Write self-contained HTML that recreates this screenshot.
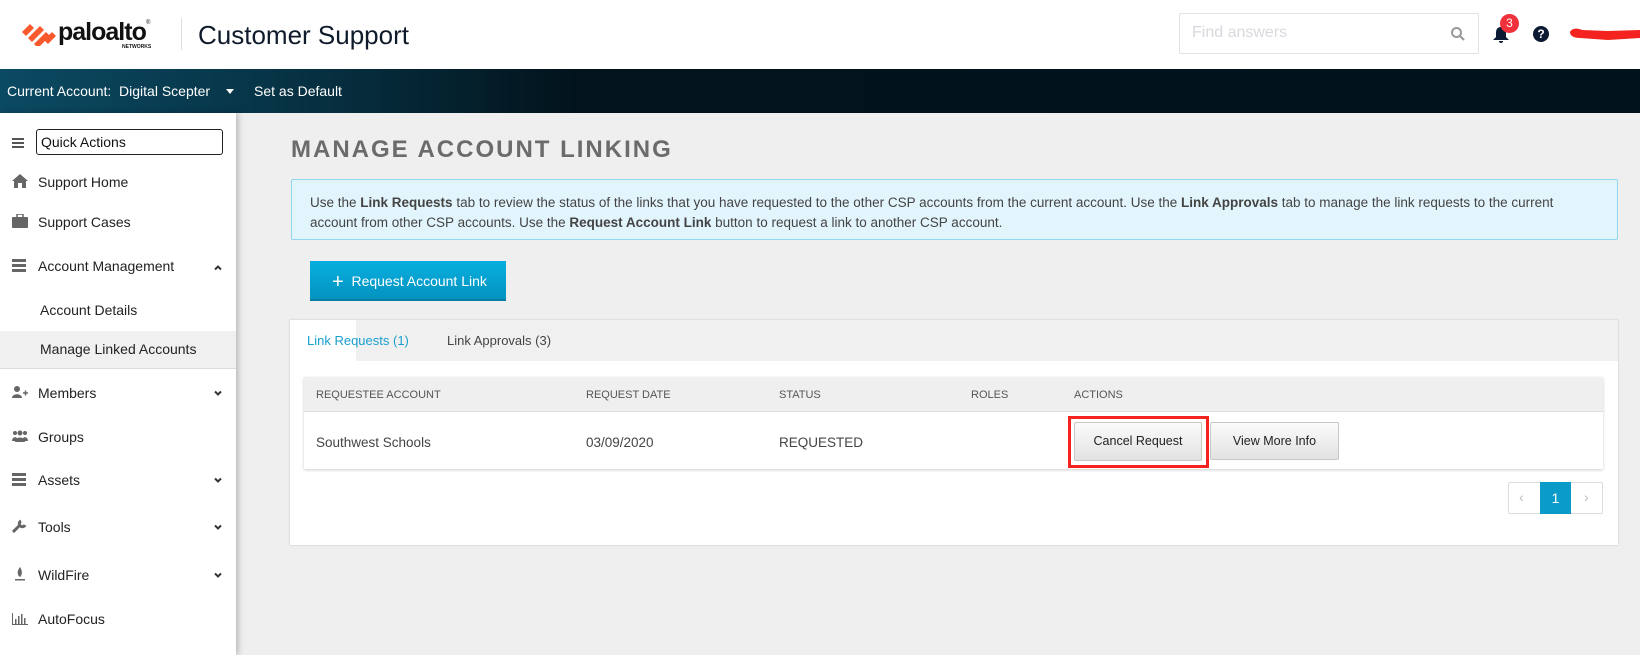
<!DOCTYPE html>
<html><head><meta charset="utf-8"><style>
*{margin:0;padding:0;box-sizing:border-box}
body{width:1640px;height:655px;overflow:hidden;background:#efefef;font-family:"Liberation Sans",sans-serif;position:relative;color:#333}
.a{position:absolute;white-space:nowrap}
#hdr{left:0;top:0;width:1640px;height:69px;background:#fff}
#nav{left:0;top:69px;width:1640px;height:44px;background:linear-gradient(90deg,#0b4a63 0%,#062f40 20%,#02131c 35%,#01121b 100%);color:#fff;font-size:14px}
#side{left:0;top:113px;width:236px;height:542px;background:#fff;box-shadow:2px 0 6px rgba(0,0,0,.25)}
.mi{position:absolute;left:38px;font-size:14px;color:#222}
.ic{position:absolute;left:12px;width:16px;height:14px}
.chev{position:absolute;left:213px;width:10px;height:7px}
.th{position:absolute;top:12px;font-size:11px;color:#555}
.btn{position:absolute;border:1px solid #c8c8c8;background:linear-gradient(#fbfbfb,#e2e2e2);font-size:12.5px;color:#222;text-align:center;line-height:37px;border-radius:2px}
</style></head><body>
<div class="a" id="hdr">
 <svg class="a" style="left:20px;top:22px" width="48" height="24" viewBox="0 0 48 24">
  <g fill="#fa582d"><path d="M2 10 L10 2 L14 6 L6 14Z"/><path d="M8 16 L20 4 L24 8 L12 20Z"/><path d="M14 22 L26 10 L30 14 L18 26Z"/><path d="M24 18 L32 10 L36 14 L28 22Z"/></g>
 </svg>
 <div class="a" style="left:58px;top:18px;font-size:25px;font-weight:bold;color:#111;letter-spacing:-1px">paloalto</div>
 <div class="a" style="left:146px;top:20px;font-size:6px;color:#111">®</div>
 <div class="a" style="left:122px;top:44px;font-size:5px;font-weight:bold;color:#111">NETWORKS</div>
 <div class="a" style="left:181px;top:18px;width:1px;height:32px;background:#ddd"></div>
 <div class="a" style="left:198px;top:20px;font-size:26px;color:#0f1a2a">Customer Support</div>
 <div class="a" style="left:1179px;top:13px;width:300px;height:41px;border:1px solid #e2e2e2;border-radius:2px"></div>
 <div class="a" style="left:1192px;top:24px;font-size:16px;color:#d6d9de">Find answers</div>
 <svg class="a" style="left:1450px;top:26px" width="16" height="16" viewBox="0 0 16 16"><circle cx="6.5" cy="6.5" r="4.5" fill="none" stroke="#999" stroke-width="2"/><path d="M10 10 L14 14" stroke="#999" stroke-width="2.2"/></svg>
 <svg class="a" style="left:1491px;top:25px" width="20" height="20" viewBox="0 0 20 20"><path d="M10 2 C6 2 5 5 5 8 L5 12 L2 15 L18 15 L15 12 L15 8 C15 5 14 2 10 2Z M8 16 a2 2 0 0 0 4 0Z" fill="#0c1a33"/></svg>
 <div class="a" style="left:1500px;top:14px;width:19px;height:19px;border-radius:50%;background:#f0303a;color:#fff;font-size:12px;text-align:center;line-height:19px">3</div>
 <div class="a" style="left:1533px;top:26px;width:16px;height:16px;border-radius:50%;background:#0c1a33;color:#fff;font-size:12px;font-weight:bold;text-align:center;line-height:16px">?</div>
 <svg class="a" style="left:1568px;top:24px" width="72" height="22" viewBox="0 0 72 22"><path d="M2 8 C4 4 10 4 14 6 L40 7 L72 6 L72 14 L40 16 L12 14 C6 14 2 12 2 8Z" fill="#f4231f"/></svg>
</div>
<div class="a" id="nav">
 <div class="a" style="left:7px;top:14px">Current Account:&nbsp; Digital Scepter</div>
 <div class="a" style="left:226px;top:20px;width:0;height:0;border-left:4px solid transparent;border-right:4px solid transparent;border-top:5px solid #fff"></div>
 <div class="a" style="left:254px;top:14px">Set as Default</div>
</div>
<div class="a" id="side">
 <div class="a" style="left:12px;top:25px;width:12px;height:2px;background:#555;box-shadow:0 4px 0 #555,0 8px 0 #555"></div>
 <div class="a" style="left:36px;top:16px;width:187px;height:26px;border:1px solid #222;border-radius:3px;font-size:14px;line-height:24px;padding-left:4px;color:#111">Quick Actions</div>
 <svg class="ic" style="top:61px" viewBox="0 0 16 14"><path d="M8 0 L16 7 L14 7 L14 14 L10 14 L10 9 L6 9 L6 14 L2 14 L2 7 L0 7Z" fill="#666"/></svg>
 <div class="mi" style="top:61px">Support Home</div>
 <svg class="ic" style="top:101px" viewBox="0 0 16 14"><rect x="0" y="3" width="16" height="11" rx="1" fill="#666"/><rect x="5" y="0" width="6" height="4" fill="none" stroke="#666" stroke-width="1.5"/></svg>
 <div class="mi" style="top:101px">Support Cases</div>
 <svg class="ic" style="top:145px" viewBox="0 0 16 14"><g fill="#666"><rect y="1" width="14" height="3"/><rect y="6" width="14" height="3"/><rect y="11" width="14" height="3"/></g></svg>
 <div class="mi" style="top:145px">Account Management</div>
 <svg class="chev" style="top:151px" viewBox="0 0 10 7"><path d="M2 5.5 L5 2.5 L8 5.5" stroke="#333" stroke-width="2" fill="none"/></svg>
 <div class="mi" style="top:189px;left:40px">Account Details</div>
 <div class="a" style="left:0;top:218px;width:236px;height:38px;background:#f0f0f0;border-bottom:1px solid #ddd"></div>
 <div class="mi" style="top:228px;left:40px">Manage Linked Accounts</div>
 <svg class="ic" style="top:272px" viewBox="0 0 16 14"><circle cx="5" cy="4" r="3" fill="#666"/><path d="M0 13 C0 8 10 8 10 13Z" fill="#666"/><path d="M11 8 H16 M13.5 5.5 V10.5" stroke="#666" stroke-width="1.5"/></svg>
 <div class="mi" style="top:272px">Members</div><svg class="chev" style="top:277px" viewBox="0 0 10 7"><path d="M2 1.5 L5 4.5 L8 1.5" stroke="#333" stroke-width="2" fill="none"/></svg>
 <svg class="ic" style="top:316px" viewBox="0 0 16 14"><g fill="#666"><circle cx="3" cy="4" r="2"/><circle cx="13" cy="4" r="2"/><circle cx="8" cy="4" r="2.5"/><path d="M0 12 C0 7 6 7 6 12Z M10 12 C10 7 16 7 16 12Z M3 13 C3 7 13 7 13 13Z"/></g></svg>
 <div class="mi" style="top:316px">Groups</div>
 <svg class="ic" style="top:359px" viewBox="0 0 16 14"><g fill="#666"><rect y="1" width="14" height="3"/><rect y="6" width="14" height="3"/><rect y="11" width="14" height="3"/></g></svg>
 <div class="mi" style="top:359px">Assets</div><svg class="chev" style="top:364px" viewBox="0 0 10 7"><path d="M2 1.5 L5 4.5 L8 1.5" stroke="#333" stroke-width="2" fill="none"/></svg>
 <svg class="ic" style="top:406px" viewBox="0 0 16 14"><path d="M1 13 L8 6 M9 2 a3 3 0 1 0 4 4" stroke="#666" stroke-width="3" fill="none"/></svg>
 <div class="mi" style="top:406px">Tools</div><svg class="chev" style="top:411px" viewBox="0 0 10 7"><path d="M2 1.5 L5 4.5 L8 1.5" stroke="#333" stroke-width="2" fill="none"/></svg>
 <svg class="ic" style="top:454px" viewBox="0 0 16 14"><path d="M8 0 C4 5 6 9 8 10 C10 8 11 5 8 0Z" fill="#666"/><rect x="3" y="12" width="10" height="1.5" fill="#666"/></svg>
 <div class="mi" style="top:454px">WildFire</div><svg class="chev" style="top:459px" viewBox="0 0 10 7"><path d="M2 1.5 L5 4.5 L8 1.5" stroke="#333" stroke-width="2" fill="none"/></svg>
 <svg class="ic" style="top:498px" viewBox="0 0 16 14"><g fill="#666"><rect x="0" y="13" width="16" height="1"/><rect x="0" y="2" width="1" height="12"/><rect x="3" y="8" width="1.5" height="5"/><rect x="6" y="5" width="1.5" height="8"/><rect x="9" y="3" width="1.5" height="10"/><rect x="12" y="7" width="1.5" height="6"/></g></svg>
 <div class="mi" style="top:498px">AutoFocus</div>
</div>
<div class="a" style="left:291px;top:136px;font-size:24px;font-weight:bold;color:#6b6b6b;letter-spacing:2px">MANAGE ACCOUNT LINKING</div>
<div class="a" style="left:291px;top:179px;width:1327px;height:61px;background:#e2f4fc;border:1px solid #93d6f2;border-radius:2px;font-size:13.5px;color:#444;line-height:20px;padding:13px 60px 0 18px;white-space:normal">Use the <b>Link Requests</b> tab to review the status of the links that you have requested to the other CSP accounts from the current account. Use the <b>Link Approvals</b> tab to manage the link requests to the current account from other CSP accounts. Use the <b>Request Account Link</b> button to request a link to another CSP account.</div>
<div class="a" style="left:310px;top:261px;width:196px;height:40px;background:linear-gradient(#06afe0,#0593bf);border-bottom:2px solid #057ea5;color:#fff;font-size:14px;line-height:40px;padding-left:22px"><span style="font-size:20px;vertical-align:-2px">+</span>&nbsp; Request Account Link</div>
<div class="a" style="left:290px;top:320px;width:1328px;height:225px;background:#fff;box-shadow:0 0 2px rgba(0,0,0,.2)">
 <div class="a" style="left:0;top:0;width:1328px;height:41px;background:#f0f0f0"></div>
 <div class="a" style="left:0;top:0;width:66px;height:41px;background:#fff"></div>
 <div class="a" style="left:17px;top:13px;font-size:13px;color:#1a9fd0">Link Requests (1)</div>
 <div class="a" style="left:157px;top:13px;font-size:13px;color:#444">Link Approvals (3)</div>
 <div class="a" style="left:14px;top:57px;width:1299px;height:92px;background:#fff;box-shadow:0 1px 3px rgba(0,0,0,.2)">
  <div class="a" style="left:0;top:0;width:1299px;height:35px;background:#efefef;border-bottom:1px solid #ddd"></div>
  <div class="th" style="left:12px">REQUESTEE ACCOUNT</div>
  <div class="th" style="left:282px">REQUEST DATE</div>
  <div class="th" style="left:475px">STATUS</div>
  <div class="th" style="left:667px">ROLES</div>
  <div class="th" style="left:770px">ACTIONS</div>
  <div class="a" style="left:12px;top:58px;font-size:13.5px;color:#444">Southwest Schools</div>
  <div class="a" style="left:282px;top:58px;font-size:13.5px;color:#444">03/09/2020</div>
  <div class="a" style="left:475px;top:58px;font-size:13.5px;color:#444">REQUESTED</div>
  <div class="a" style="left:764px;top:39px;width:141px;height:52px;border:3px solid #f4231f"></div>
  <div class="btn" style="left:770px;top:45px;width:128px;height:39px">Cancel Request</div>
  <div class="btn" style="left:906px;top:45px;width:129px;height:38px">View More Info</div>
 </div>
 <div class="a" style="left:1218px;top:162px;width:95px;height:32px;border:1px solid #ddd;border-radius:2px;color:#bbb;font-size:14px">
  <div class="a" style="left:10px;top:6px">&#8249;</div>
  <div class="a" style="left:31px;top:-1px;width:31px;height:32px;background:#0a9bc8;color:#fff;text-align:center;line-height:32px">1</div>
  <div class="a" style="left:75px;top:6px">&#8250;</div>
 </div>
</div>
</body></html>
